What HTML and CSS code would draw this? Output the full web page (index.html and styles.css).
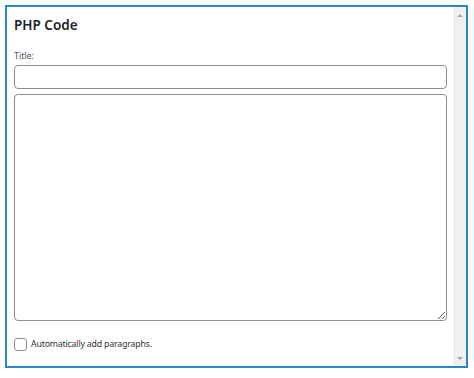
FILE: index.html
```html
<!DOCTYPE html>
<html>
<head>
<meta charset="utf-8">
<link rel="stylesheet" href="styles.css">
</head>
<body>
<div class="frame">
  <div class="content">
    <h2 class="title">PHP Code</h2>
    <label class="label" for="t">Title:</label>
    <input class="input" id="t" type="text">
    <textarea class="code"></textarea>
    <label class="check">
      <span class="box"></span>
      <span class="check-text">Automatically add paragraphs.</span>
    </label>
  </div>
  <div class="scrollbar">
    <span class="arrow up"></span>
    <span class="arrow down"></span>
  </div>
</div>
</body>
</html>
```
FILE: styles.css
```css
html, body {
  margin: 0;
  padding: 0;
  background: #ffffff;
}
body {
  font-family: "Noto Sans", "Open Sans", sans-serif;
  color: #1d2327;
}
.frame {
  margin: 5px;
  width: 459px;
  height: 359px;
  border: 2px solid #2b88c2;
  display: flex;
  background: #fff;
}
.content {
  flex: 1;
  padding: 0 6px 0 7px;
  display: flex;
  flex-direction: column;
}
.title {
  margin: 8px 0 0 0;
  font-size: 13.5px;
  font-weight: 600;
  line-height: 20px;
  color: #1d2327;
}
.label {
  margin-top: 14px;
  font-size: 9px;
  line-height: 13px;
  letter-spacing: -0.1px;
  color: #50575e;
}
.input {
  margin: 3px 0 0 0;
  height: 24px;
  box-sizing: border-box;
  border: 1px solid #8c8f94;
  border-radius: 4px;
  padding: 0 6px;
  outline: none;
}
.code {
  margin: 5px 0 0 0;
  height: 227px;
  box-sizing: border-box;
  border: 1px solid #8c8f94;
  border-radius: 4px;
  resize: vertical;
  outline: none;
}
.check {
  margin-top: 17px;
  display: flex;
  align-items: center;
  gap: 4px;
}
.box {
  box-sizing: border-box;
  width: 13px;
  height: 13px;
  border: 1px solid #8c8f94;
  border-radius: 3px;
  background: #fff;
}
.check-text {
  font-size: 8.8px;
  line-height: 13px;
  letter-spacing: -0.2px;
  color: #2c3338;
}
.scrollbar {
  width: 13px;
  background: #f0f0f0;
  display: flex;
  flex-direction: column;
  justify-content: space-between;
  align-items: center;
  padding: 7px 0 6px;
}
.arrow {
  width: 0;
  height: 0;
  border-left: 3px solid transparent;
  border-right: 3px solid transparent;
}
.up {
  border-bottom: 3px solid #a3a3a3;
}
.down {
  border-top: 3px solid #a3a3a3;
}
```
